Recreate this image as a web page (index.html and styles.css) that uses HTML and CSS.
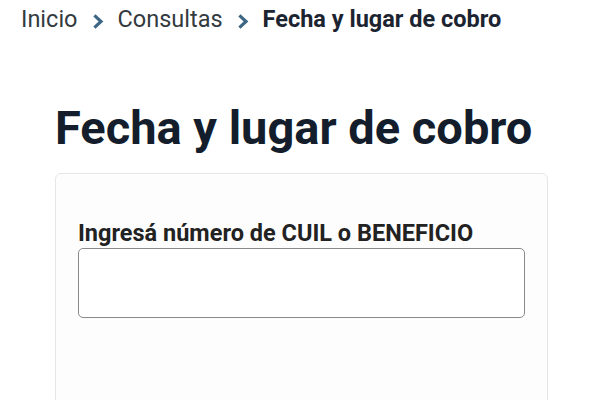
FILE: index.html
```html
<!DOCTYPE html>
<html lang="es">
<head>
<meta charset="utf-8">
<link rel="stylesheet" href="styles.css">
</head>
<body>
<nav class="crumbs">
  <span class="crumb">Inicio</span>
  <svg class="chev" viewBox="0 0 12 15" width="12" height="15"><path d="M2.4 1.4 L9 7.5 L2.4 13.6" fill="none" stroke="#3d6684" stroke-width="3.2"/></svg>
  <span class="crumb">Consultas</span>
  <svg class="chev" viewBox="0 0 12 15" width="12" height="15"><path d="M2.4 1.4 L9 7.5 L2.4 13.6" fill="none" stroke="#3d6684" stroke-width="3.2"/></svg>
  <span class="crumb current">Fecha y lugar de cobro</span>
</nav>
<main class="main">
  <h1 class="title">Fecha y lugar de cobro</h1>
  <section class="card">
    <label class="label" for="cuil">Ingresá número de CUIL o BENEFICIO</label>
    <input class="field" id="cuil" type="text">
  </section>
</main>
</body>
</html>
```
FILE: styles.css
```css
html, body {
  margin: 0;
  padding: 0;
  background: #ffffff;
  font-family: Roboto, "Liberation Sans", sans-serif;
  color: #1b2430;
  overflow: hidden;
  height: 400px;
}
.crumbs {
  display: flex;
  align-items: center;
  gap: 14px;
  padding: 4px 0 0 21px;
  height: 30px;
  font-size: 23.5px;
  line-height: 30px;
  color: #333a40;
}
.chev { margin-top: 4px; }
.current { font-weight: 700; color: #1b2430; }
.main {
  box-sizing: border-box;
  height: 366px;
  overflow: hidden;
  padding: 0 52px 0 55px;
}
.title {
  margin: 66px 0 0 0;
  font-size: 47px;
  font-weight: 700;
  line-height: 56px;
  color: #131d2b;
}
.card {
  box-sizing: border-box;
  margin-top: 17px;
  height: 240px;
  border: 1px solid #e6e6e6;
  border-radius: 6px;
  background: #fdfdfd;
  padding: 45px 22px 0 22px;
  display: flex;
  flex-direction: column;
}
.label {
  font-size: 23.5px;
  font-weight: 700;
  color: #222;
  line-height: 28px;
  margin-bottom: 1px;
}
.field {
  box-sizing: border-box;
  height: 70px;
  border: 1.5px solid #8a8a8a;
  border-radius: 5px;
  background: #fff;
}
```
